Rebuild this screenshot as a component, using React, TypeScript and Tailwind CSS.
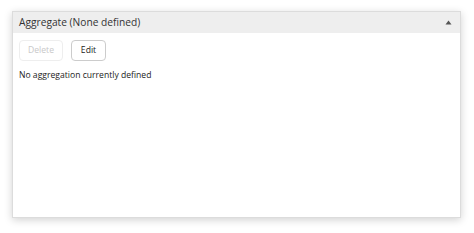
export default function App() {
  return (
    <div className="w-[474px] h-[233px] bg-white pt-[11px] pl-[12px]" style={{ fontFamily: '"Open Sans", sans-serif' }}>
      <div className="w-[449px] h-[207px] bg-white border border-[#dcdcdc] shadow-[0_2px_8px_rgba(0,0,0,0.18)] flex flex-col">
        <div className="h-[21px] bg-[#eeeeee] flex items-center justify-between pl-[6px] pr-[8px]">
          <span className="text-[10.2px] text-[#333333]">Aggregate (None defined)</span>
          <svg width="7" height="5" viewBox="0 0 7 5">
            <path d="M3.5 0.5 L6.5 4.5 L0.5 4.5 Z" fill="#555555" />
          </svg>
        </div>
        <div className="px-[6px] pt-[7px] flex flex-col">
          <div className="flex gap-[8px]">
            <button className="h-[21px] w-[44px] rounded-[4px] border border-[#eeeeee] text-[8.6px] text-[#c8c8c8] bg-white">Delete</button>
            <button className="h-[21px] w-[35px] rounded-[4px] border border-[#cccccc] text-[8.6px] text-[#222222] bg-white">Edit</button>
          </div>
          <div className="mt-[8px] text-[8.6px] text-[#222222]">No aggregation currently defined</div>
        </div>
      </div>
    </div>
  );
}
